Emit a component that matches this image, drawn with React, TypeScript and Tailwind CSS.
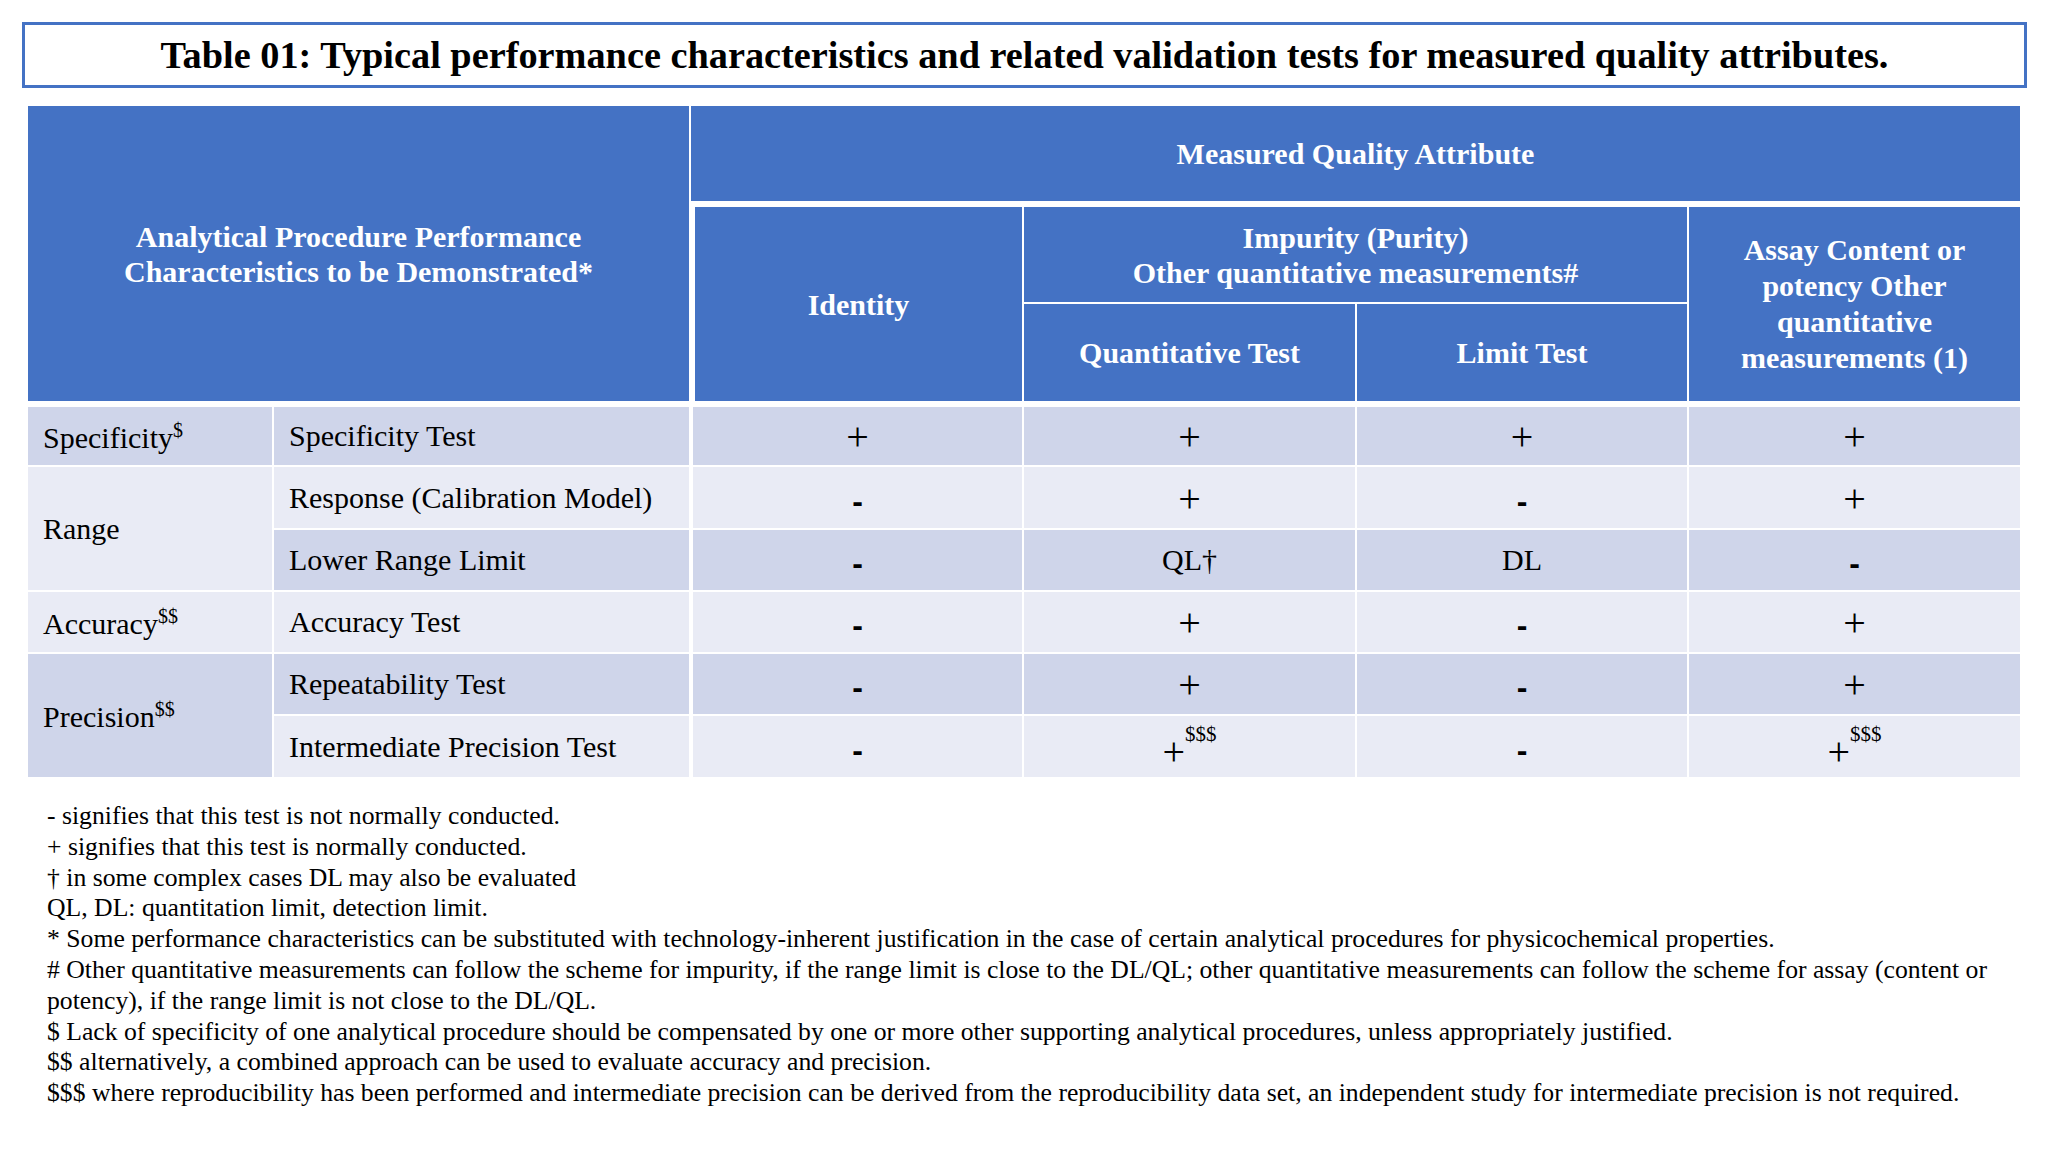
import React from "react";

const blue = "bg-[#4472C4]";
const dark = "bg-[#CFD5EA]";
const light = "bg-[#E9EBF5]";

type Row = {
  test: string;
  cells: React.ReactNode[];
  shade: string;
};

const Dash = () => (
  <span className="inline-block pt-[6px] font-['Liberation_Sans',sans-serif] text-[32px] font-black">-</span>
);

const Plus = ({ sup }: { sup?: boolean }) =>
  sup ? (
    <span className="inline-flex items-start pt-[2px]">
      <span className="pt-[8px] text-[40px] leading-none">+</span>
      <span className="text-[21px]">$$$</span>
    </span>
  ) : (
    <span className="pt-[2px] text-[40px] leading-none">+</span>
  );

const Sup = ({ children }: { children: string }) => (
  <span className="align-[0.55em] text-[20px]">{children}</span>
);

const rows: Row[] = [
  { test: "Specificity Test", cells: [<Plus />, <Plus />, <Plus />, <Plus />], shade: dark },
  { test: "Response (Calibration Model)", cells: [<Dash />, <Plus />, <Dash />, <Plus />], shade: light },
  { test: "Lower Range Limit", cells: [<Dash />, "QL†", "DL", <Dash />], shade: dark },
  { test: "Accuracy Test", cells: [<Dash />, <Plus />, <Dash />, <Plus />], shade: light },
  { test: "Repeatability Test", cells: [<Dash />, <Plus />, <Dash />, <Plus />], shade: dark },
  { test: "Intermediate Precision Test", cells: [<Dash />, <Plus sup />, <Dash />, <Plus sup />], shade: light },
];

const notes = [
  "- signifies that this test is not normally conducted.",
  "+ signifies that this test is normally conducted.",
  "† in some complex cases DL may also be evaluated",
  "QL, DL: quantitation limit, detection limit.",
  "* Some performance characteristics can be substituted with technology-inherent justification in the case of certain analytical procedures for physicochemical properties.",
  "# Other quantitative measurements can follow the scheme for impurity, if the range limit is close to the DL/QL; other quantitative measurements can follow the scheme for assay (content or",
  "potency), if the range limit is not close to the DL/QL.",
  "$ Lack of specificity of one analytical procedure should be compensated by one or more other supporting analytical procedures, unless appropriately justified.",
  "$$ alternatively, a combined approach can be used to evaluate accuracy and precision.",
  "$$$ where reproducibility has been performed and intermediate precision can be derived from the reproducibility data set, an independent study for intermediate precision is not required.",
];

export default function App() {
  return (
    <div className="min-h-[1152px] w-[2048px] bg-white pt-[22px] pl-[22px] font-['Liberation_Serif',serif] text-black">
      {/* title */}
      <div className="flex h-[66px] w-[2005px] items-center justify-center border-[3px] border-[#4472C4]">
        <h1 className="text-[38.3px] font-bold leading-none">
          Table 01: Typical performance characteristics and related validation tests for measured quality attributes.
        </h1>
      </div>

      <div className="ml-[6px] mt-[18px] w-[1992px]">
        {/* header */}
        <div className="grid grid-cols-[244px_415px_331px_331px_330px_331px] grid-rows-[95px_99px_97px] gap-[2px] text-[30px] font-bold leading-[35px] text-white">
          <div className={`${blue} col-span-2 row-span-3 flex items-center justify-center text-center`}>
            Analytical Procedure Performance
            <br />
            Characteristics to be Demonstrated*
          </div>
          <div className={`${blue} col-span-4 col-start-3 row-start-1 flex items-center justify-center`}>
            Measured Quality Attribute
          </div>
          <div className={`${blue} col-start-3 row-span-2 row-start-2 ml-[4px] mt-[4px] flex items-center justify-center`}>
            Identity
          </div>
          <div className={`${blue} col-span-2 col-start-4 row-start-2 mt-[4px] flex items-center justify-center text-center`}>
            Impurity (Purity)
            <br />
            Other quantitative measurements#
          </div>
          <div className={`${blue} col-start-6 row-span-2 row-start-2 mt-[4px] flex items-center justify-center text-center leading-[36px]`}>
            Assay Content or
            <br />
            potency Other
            <br />
            quantitative
            <br />
            measurements (1)
          </div>
          <div className={`${blue} col-start-4 row-start-3 flex items-center justify-center`}>Quantitative Test</div>
          <div className={`${blue} col-start-5 row-start-3 flex items-center justify-center`}>Limit Test</div>
        </div>

        {/* body */}
        <div className="mt-[6px] grid grid-cols-[244px_415px_331px_331px_330px_331px] grid-rows-[58px_61px_60px_60px_60px_61px] gap-[2px] text-[30px] leading-none">
          <div className={`${dark} col-start-1 row-start-1 flex items-center pl-[15px]`}>
            <span>
              Specificity<Sup>$</Sup>
            </span>
          </div>
          <div className={`${light} col-start-1 row-span-2 row-start-2 flex items-center pl-[15px]`}>Range</div>
          <div className={`${light} col-start-1 row-start-4 flex items-center pl-[15px]`}>
            <span>
              Accuracy<Sup>$$</Sup>
            </span>
          </div>
          <div className={`${dark} col-start-1 row-span-2 row-start-5 flex items-center pl-[15px]`}>
            <span>
              Precision<Sup>$$</Sup>
            </span>
          </div>

          {rows.map((r, i) => (
            <React.Fragment key={r.test}>
              <div className={`${r.shade} col-start-2 flex items-center pl-[15px]`} style={{ gridRowStart: i + 1 }}>
                {r.test}
              </div>
              {r.cells.map((c, j) => (
                <div
                  key={j}
                  className={`${r.shade} flex items-center justify-center ${j === 0 ? "ml-[2px]" : ""}`}
                  style={{ gridRowStart: i + 1, gridColumnStart: j + 3 }}
                >
                  {c}
                </div>
              ))}
            </React.Fragment>
          ))}
        </div>
      </div>

      {/* notes */}
      <div className="ml-[25px] mt-[24px] text-[25.7px] leading-[30.8px]">
        {notes.map((n) => (
          <div key={n} className="whitespace-nowrap">
            {n}
          </div>
        ))}
      </div>
    </div>
  );
}
